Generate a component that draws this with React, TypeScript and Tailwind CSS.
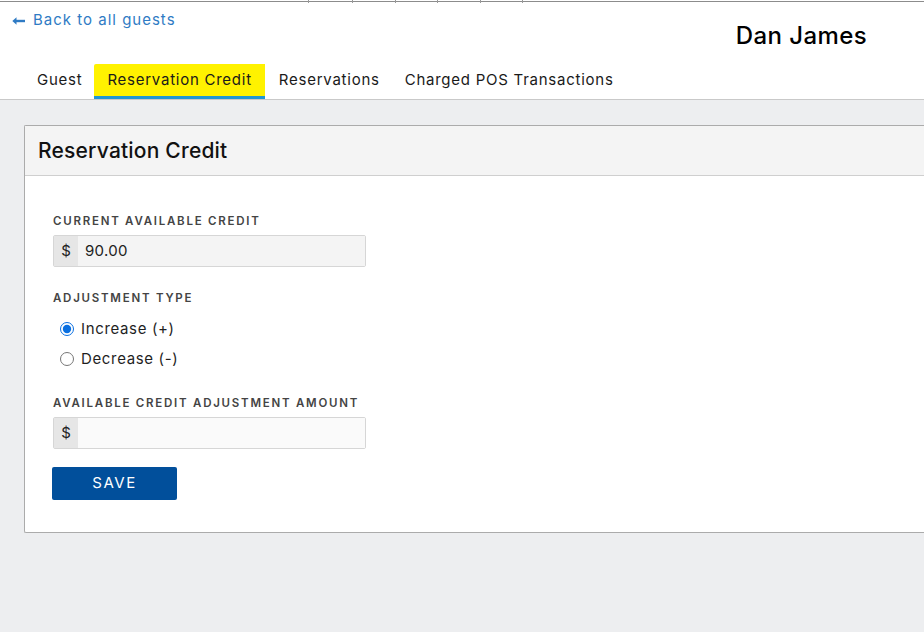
import React from "react";

const font = { fontFamily: "Inter, 'Open Sans', 'Liberation Sans', sans-serif" };

export default function App() {
  const ticks = [308, 352, 395, 437, 480, 522];
  const label = "text-[11.5px] font-semibold tracking-[1.75px] text-[#444] leading-[14px]";
  return (
    <div className="min-h-[632px] w-[924px] bg-[#edeef0] text-[#1a1a1a] overflow-hidden" style={font}>
      {/* header */}
      <div className="relative bg-white border-b border-[#c9c9c9] h-[100px]">
        <div className="h-[2px] border-b border-[#8c8c8c]" />
        {ticks.map((x) => (
          <div key={x} className="absolute top-0 h-[3px] w-px bg-[#9a9a9a]" style={{ left: x }} />
        ))}
        <div className="flex justify-between h-[62px]">
          <a className="flex items-center gap-[8px] pl-[12px] pt-[10px] h-[26px] text-[15px] tracking-[1px] text-[#2f7bc4]">
            <svg width="13" height="8" viewBox="0 0 13 8" className="mt-[1px]">
              <path d="M4.5 0.3 L0.3 4 L4.5 7.7 Z" fill="#2f7bc4" />
              <rect x="3" y="2.8" width="10" height="2.4" fill="#2f7bc4" />
            </svg>
            <span>Back to all guests</span>
          </a>
          <div className="pr-[57px] pt-[19px] text-[24px] font-medium tracking-[0.4px] text-black leading-[30px]">Dan James</div>
        </div>
        <div className="flex pl-[24px] h-[36px] text-[15px] tracking-[0.75px]">
          <div className="pl-[13px] pr-[12px] flex items-center h-[35px] border-b-[3px] border-transparent pt-[1px]">Guest</div>
          <div className="px-[13px] flex items-center h-[35px] bg-[#fff200] border-b-[3px] border-[#2196d3] rounded-tl-[2px] pt-[1px]">
            Reservation Credit
          </div>
          <div className="pl-[14px] pr-[12px] flex items-center h-[35px] border-b-[3px] border-transparent pt-[1px]">Reservations</div>
          <div className="px-[13px] flex items-center h-[35px] border-b-[3px] border-transparent pt-[1px]">Charged POS Transactions</div>
        </div>
      </div>

      {/* body */}
      <div className="pt-[25px] pl-[24px]">
        <div className="bg-white border border-r-0 border-[#ababab] rounded-l-[2px] h-[408px]">
          <div className="h-[50px] bg-[#f4f4f4] border-b border-[#cfcfcf] flex items-center px-[13px] text-[21px] font-medium tracking-[0.2px] text-[#111]">
            Reservation Credit
          </div>
          <div className="pl-[28px] pt-[38px]">
            <div className={label}>CURRENT AVAILABLE CREDIT</div>
            <div className="mt-[7px] flex w-[313px] h-[32px] border border-[#d6d6d6] rounded-[2px]">
              <div className="w-[24px] bg-[#e6e6e6] flex items-center justify-center text-[15px] text-[#222]">$</div>
              <div className="flex-1 bg-[#f4f4f4] flex items-center pl-[7px] text-[15px] tracking-[0.3px] text-[#222]">90.00</div>
            </div>

            <div className={"mt-[24px] " + label}>ADJUSTMENT TYPE</div>
            <div className="mt-[9px] pl-[7px]">
              <label className="flex items-center h-[30px] gap-[7px] text-[15px] tracking-[0.65px] text-[#1f1f1f]">
                <input type="radio" name="adj" defaultChecked className="m-0 w-[14px] h-[14px] accent-[#0a6fe0]" />
                Increase (+)
              </label>
              <label className="flex items-center h-[30px] gap-[7px] text-[15px] tracking-[0.65px] text-[#1f1f1f]">
                <input type="radio" name="adj" className="m-0 w-[14px] h-[14px] accent-[#0a6fe0]" />
                Decrease (-)
              </label>
            </div>

            <div className={"mt-[22px] " + label}>AVAILABLE CREDIT ADJUSTMENT AMOUNT</div>
            <div className="mt-[7px] flex w-[313px] h-[32px] border border-[#d6d6d6] rounded-[2px]">
              <div className="w-[24px] bg-[#e6e6e6] flex items-center justify-center text-[15px] text-[#222]">$</div>
              <input className="flex-1 bg-[#fafafa] outline-none pl-[7px] text-[15px]" />
            </div>

            <button className="mt-[18px] -ml-[1px] w-[125px] h-[33px] bg-[#014f9b] text-white text-[15px] tracking-[1.5px] rounded-[2px]">
              SAVE
            </button>
          </div>
        </div>
      </div>
    </div>
  );
}
